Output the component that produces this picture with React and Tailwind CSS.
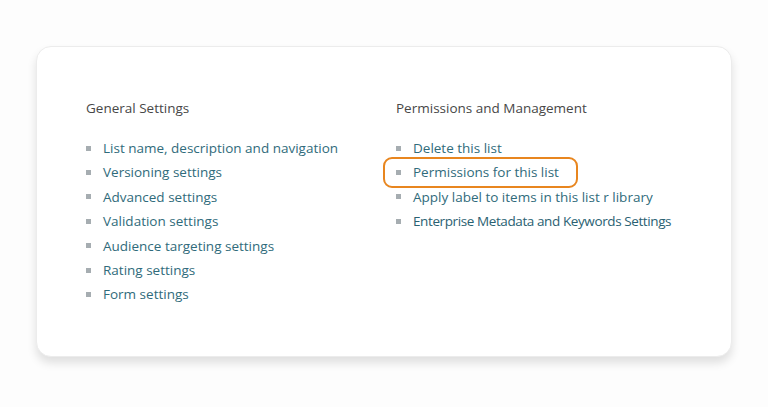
import React from "react";

const general = [
  "List name, description and navigation",
  "Versioning settings",
  "Advanced settings",
  "Validation settings",
  "Audience targeting settings",
  "Rating settings",
  "Form settings",
];

const perms = [
  "Delete this list",
  "Permissions for this list",
  "Apply label to items in this list r library",
  "Enterprise Metadata and Keywords Settings",
];

function Item({ text, highlight, tight }) {
  return (
    <li className="relative flex items-center h-[24.4px]">
      {highlight && (
        <span className="absolute left-[-13px] top-[-3px] w-[195px] h-[31px] rounded-[9px] border-2 border-[#e8861f]" />
      )}
      <span className="w-[5px] h-[5px] bg-[#a6adb1] mr-[12px]" />
      <span className={tight ? "tracking-[-0.4px] text-[#2a6172]" : ""}>{text}</span>
    </li>
  );
}

export default function App() {
  return (
    <div
      className="w-[768px] h-[407px] bg-[#fdfdfd] pt-[46px] pl-[36px]"
      style={{ fontFamily: '"Open Sans", "Noto Sans", sans-serif' }}
    >
      <div className="w-[696px] h-[311px] bg-white rounded-[15px] border border-[#ececec] shadow-[0_6px_10px_rgba(0,0,0,0.12)] flex pl-[49px] pt-[51px]">
        <div className="w-[310px]">
          <h2 className="text-[13.5px] text-[#474747] leading-[20px]">General Settings</h2>
          <ul className="mt-[18px] text-[13.5px] text-[#306b7b]">
            {general.map((t) => (
              <Item key={t} text={t} />
            ))}
          </ul>
        </div>
        <div>
          <h2 className="text-[13.5px] text-[#474747] leading-[20px]">Permissions and Management</h2>
          <ul className="mt-[18px] text-[13.5px] text-[#306b7b]">
            {perms.map((t, i) => (
              <Item key={t} text={t} highlight={i === 1} tight={i === 3} />
            ))}
          </ul>
        </div>
      </div>
    </div>
  );
}
